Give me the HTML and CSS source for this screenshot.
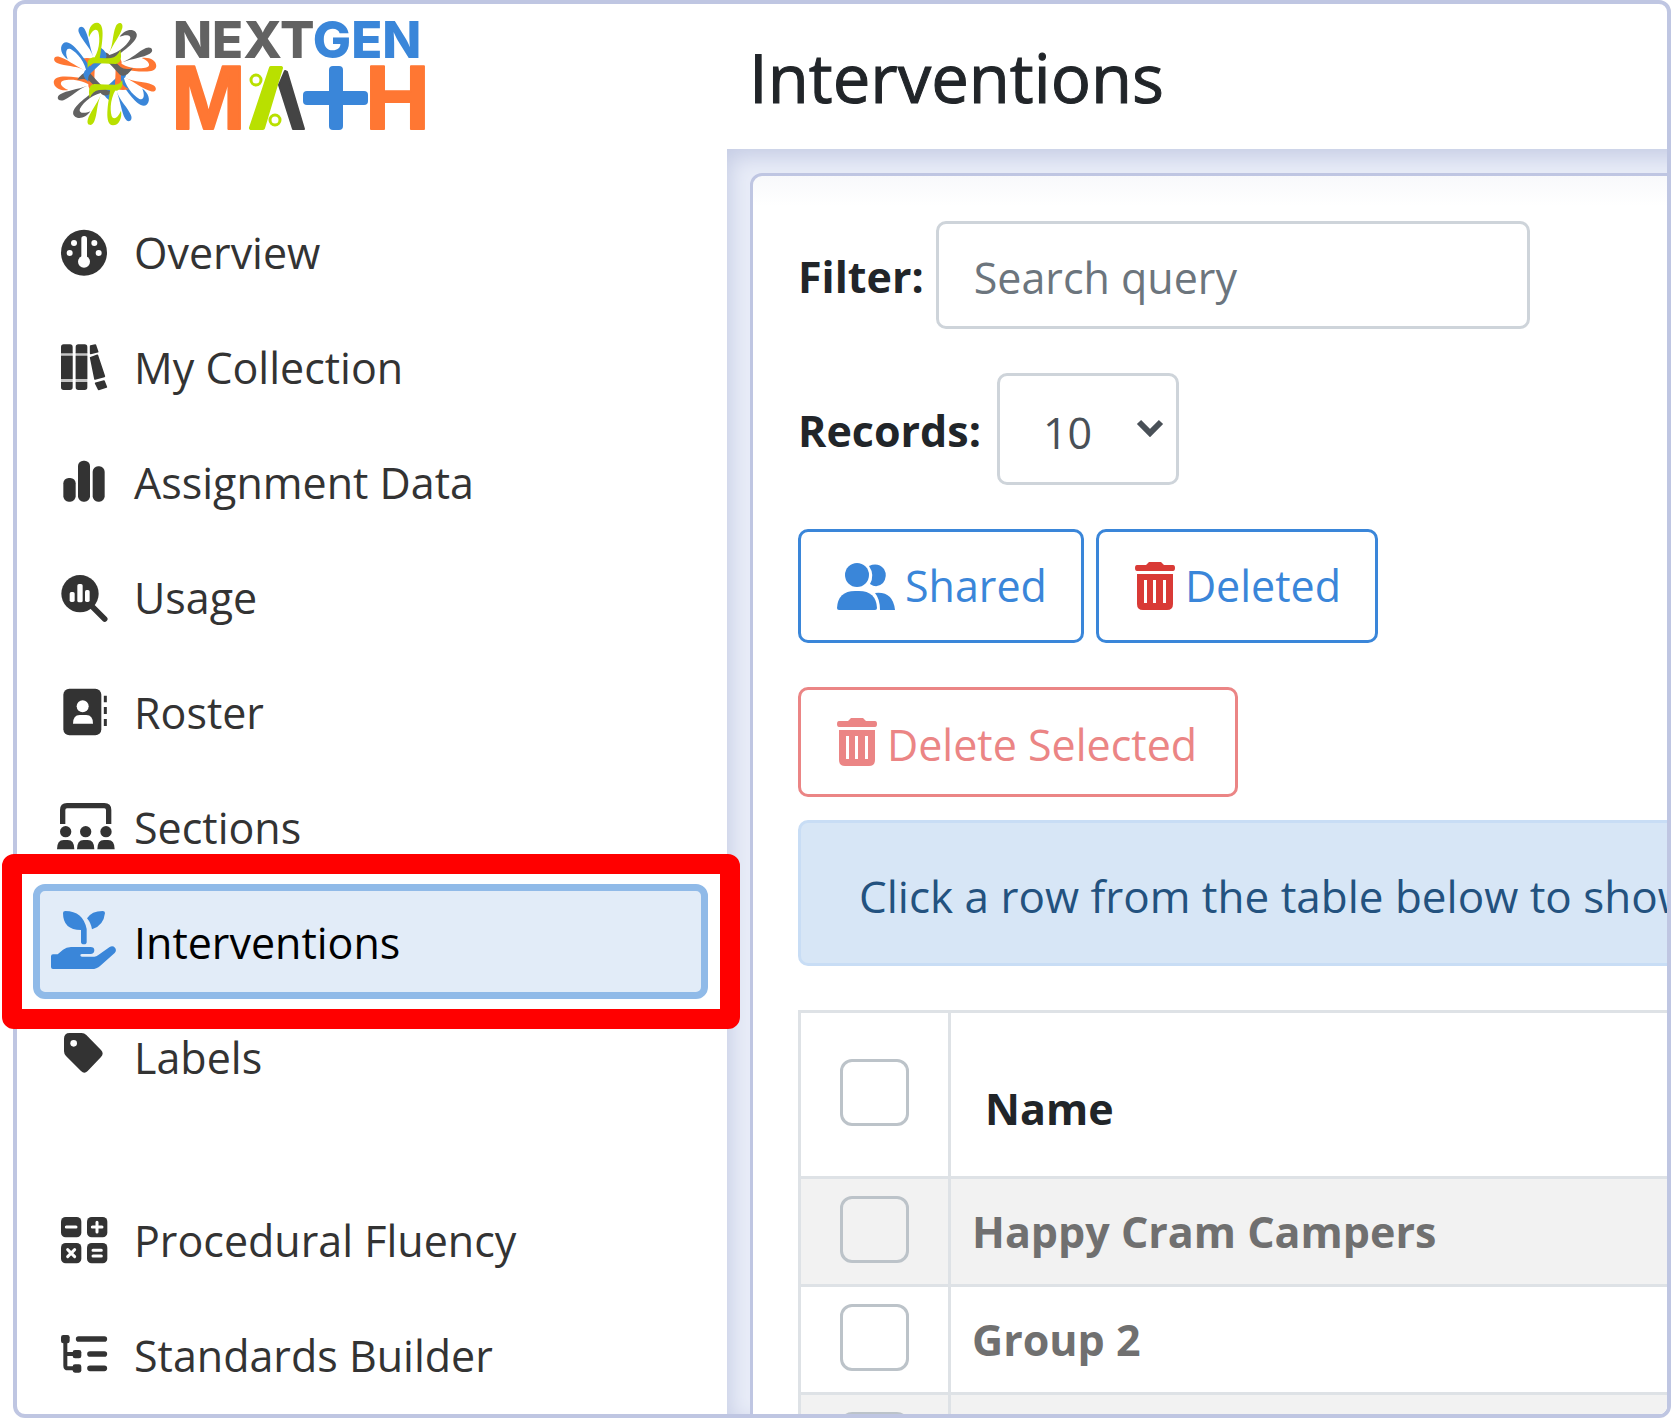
FILE: index.html
```html
<!DOCTYPE html>
<html lang="en">
<head>
    <meta charset="UTF-8">
    <meta name="viewport" content="width=device-width, initial-scale=1.0">
    <title>Interventions</title>
    <link rel="stylesheet" href="styles.css">
</head>
<body>
    <div class="frame">
        <aside class="sidebar">
            <svg class="logo" viewBox="0 0 380 120" role="img" aria-label="NextGen Math">
                <defs>
                    <g id="pi">
                        <path d="M-52 -18 Q-56 -46 -36 -50 Q-10 -46 18 -48 Q36 -50 46 -72 Q54 -34 32 -30 Q0 -32 -30 -32 Q-44 -32 -52 -18Z"/>
                        <path d="M12 -62 C26 -92 22 -118 32 -142 C38 -158 56 -156 52 -138 C46 -116 26 -92 12 -62Z"/>
                        <path d="M-40 -36 C-16 -66 -14 -104 -20 -126 C-26 -140 -40 -130 -48 -110 C-52 -132 -42 -154 -24 -154 C4 -152 -10 -88 -16 -44Z"/>
                    </g>
                </defs>
                <g transform="translate(55 59) scale(.333)">
                    <use href="#pi" fill="#3a86d9" transform="rotate(135)"/>
                    <use href="#pi" fill="#ff7733" transform="rotate(90)"/>
                    <use href="#pi" fill="#ff7733" transform="rotate(270)"/>
                    <use href="#pi" fill="#626262" transform="rotate(45)"/>
                    <use href="#pi" fill="#626262" transform="rotate(225)"/>
                    <use href="#pi" fill="#3a86d9" transform="rotate(315)"/>
                    <use href="#pi" fill="#b9e000"/>
                    <use href="#pi" fill="#b9e000" transform="rotate(180)"/>
                </g>
                <text class="logo-top" x="123" y="43">NEXT<tspan fill="#3a86d9">GEN</tspan></text>
                <text class="logo-bottom" x="121" y="114">M</text>
                <path d="M201 113 L213 113 L231 53 L221 53Z" fill="#b9e000" stroke="#b9e000" stroke-width="4" stroke-linejoin="round"/>
                <g fill="#fff" stroke="#b9e000" stroke-width="3">
                    <circle cx="206" cy="65" r="5"/>
                    <circle cx="225" cy="105" r="5"/>
                </g>
                <path d="M235 56 L229 70 L243 114 L254 114 L237 57Z" fill="#444" stroke="#444" stroke-width="2" stroke-linejoin="round"/>
                <g fill="#3a86d9">
                    <rect x="253" y="76" width="65" height="14" rx="4"/>
                    <rect x="279" y="51" width="14" height="64" rx="4"/>
                </g>
                <text class="logo-bottom" x="315" y="114">H</text>
            </svg>

            <nav>
                <ul class="menu">
                    <li><a href="#">
                        <svg class="icon" viewBox="0 0 210 210">
                            <circle cx="105" cy="107" r="69"/>
                            <g fill="#fff">
                                <circle cx="75" cy="78" r="9"/>
                                <circle cx="136" cy="78" r="9"/>
                                <circle cx="62" cy="108" r="9"/>
                                <circle cx="149" cy="108" r="9"/>
                                <circle cx="105" cy="134" r="18"/>
                                <rect x="97" y="57" width="17" height="75" rx="8"/>
                            </g>
                        </svg>
                        <span>Overview</span></a></li>
                    <li><a href="#">
                        <svg class="icon" viewBox="0 0 210 210">
                            <path d="M36 60H71V150H36Z M80 60H115V150H80Z" fill="#c4c4c4"/>
                            <path d="M36 64V45Q36 37 44 37H63Q71 37 71 45V64Z M36 71H71V141H36Z M36 150H71V166Q71 174 63 174H44Q36 174 36 166Z"/>
                            <path d="M80 64V45Q80 37 88 37H107Q115 37 115 45V64Z M80 71H115V141H80Z M80 150H115V166Q115 174 107 174H88Q80 174 80 166Z"/>
                            <path d="M125 42L139 39L146 59L125 64Z M125 77L145 70L166 133L138 141Z M140 154L165 147L172 165L149 172Z" stroke="#333" stroke-width="5" stroke-linejoin="round"/>
                        </svg>
                        <span>My Collection</span></a></li>
                    <li><a href="#">
                        <svg class="icon" viewBox="0 0 210 210">
                            <rect x="43" y="93" width="37" height="71" rx="16"/>
                            <rect x="87" y="41" width="36" height="123" rx="16"/>
                            <rect x="131" y="58" width="36" height="106" rx="16"/>
                        </svg>
                        <span>Assignment Data</span></a></li>
                    <li><a href="#">
                        <svg class="icon" viewBox="0 0 210 210">
                            <circle cx="93" cy="95" r="56"/>
                            <path d="M128 132L167 171" stroke="#333" stroke-width="17" stroke-linecap="round"/>
                            <g fill="#fff">
                                <rect x="62" y="90" width="15" height="30" rx="5"/>
                                <rect x="85" y="66" width="16" height="55" rx="5"/>
                                <rect x="108" y="84" width="14" height="36" rx="5"/>
                            </g>
                        </svg>
                        <span>Usage</span></a></li>
                    <li><a href="#">
                        <svg class="icon" viewBox="0 0 210 210">
                            <rect x="43" y="35" width="114" height="140" rx="18"/>
                            <path d="M169 56V76M169 90V111M169 126V147" stroke="#333" stroke-width="9"/>
                            <circle cx="101" cy="88" r="18" fill="#fff"/>
                            <path d="M72 140Q72 114 92 114H112Q132 114 132 140Z" fill="#fff"/>
                        </svg>
                        <span>Roster</span></a></li>
                    <li><a href="#">
                        <svg class="icon" viewBox="0 0 210 210">
                            <path d="M41 96V54Q41 41 54 41H166Q179 41 179 54V96" fill="none" stroke="#333" stroke-width="16"/>
                            <circle cx="50" cy="119" r="17"/>
                            <circle cx="110" cy="119" r="17"/>
                            <circle cx="171" cy="119" r="17"/>
                            <path d="M24 172Q24 144 44 144H56Q76 144 76 172Z M84 172Q84 144 104 144H116Q136 144 136 172Z M145 172Q145 144 165 144H177Q197 144 197 172Z"/>
                        </svg>
                        <span>Sections</span></a></li>
                    <li class="active"><a href="#">
                        <svg class="icon" viewBox="0 0 210 210">
                            <path d="M42 18Q42 12 49 12Q102 12 113 66V105Q113 112 105 112Q96 112 96 105V69Q42 69 42 18Z"/>
                            <path d="M114 34Q128 12 161 12Q168 12 168 18Q164 56 129 67Q126 48 114 34Z"/>
                            <path d="M12 142H26L42 128Q52 120 66 120H124Q136 120 136 130Q136 141 124 141H99Q94 141 94 145T99 149H136Q142 149 147 145L182 120Q191 115 198 122Q204 130 197 138L154 176Q143 186 128 186H12Q6 186 6 180V148Q6 142 12 142Z"/>
                        </svg>
                        <span>Interventions</span></a></li>
                    <li><a href="#">
                        <svg class="icon" viewBox="0 0 210 210">
                            <path d="M45 50Q45 33 62 33H98Q106 33 112 39L156 84Q166 95 156 105L116 147Q106 157 96 147L51 102Q45 96 45 88Z"/>
                            <circle cx="74" cy="64" r="10" fill="#fff"/>
                        </svg>
                        <span>Labels</span></a></li>
                    <li class="group-start"><a href="#">
                        <svg class="icon" viewBox="0 0 210 210">
                            <rect x="36" y="36" width="61" height="61" rx="14"/>
                            <rect x="114" y="36" width="61" height="61" rx="14"/>
                            <rect x="36" y="114" width="61" height="61" rx="14"/>
                            <rect x="114" y="114" width="61" height="61" rx="14"/>
                            <path d="M52 66H81M130 66H159M144 52V81M56 134L77 155M77 134L56 155M132 136H157M132 153H157" stroke="#fff" stroke-width="9" stroke-linecap="round"/>
                        </svg>
                        <span>Procedural Fluency</span></a></li>
                    <li><a href="#">
                        <svg class="icon" viewBox="0 0 210 210">
                            <path d="M49 57V137Q49 145 57 145H84M49 102H84" fill="none" stroke="#333" stroke-width="12"/>
                            <rect x="36" y="45" width="26" height="25" rx="7"/>
                            <rect x="71" y="90" width="26" height="25" rx="7"/>
                            <rect x="71" y="133" width="26" height="25" rx="7"/>
                            <path d="M89 57H166M123 102H166M123 145H166" stroke="#333" stroke-width="17" stroke-linecap="round"/>
                        </svg>
                        <span>Standards Builder</span></a></li>
                </ul>
            </nav>
        </aside>

        <main class="main">
            <header class="header">
                <h1>Interventions</h1>
            </header>
            <div class="content">
                <section class="card">
                    <div class="field">
                        <label for="filter">Filter:</label>
                        <input type="text" id="filter" placeholder="Search query">
                    </div>
                    <div class="field">
                        <label for="records">Records:</label>
                        <div class="select-wrap">
                            <select id="records">
                                <option>10</option>
                                <option>25</option>
                                <option>50</option>
                            </select>
                            <svg class="chevron" viewBox="0 0 28 18"><path d="M3 3L14 14L25 3"/></svg>
                        </div>
                    </div>
                    <div class="buttons">
                        <button type="button" class="btn">
                            <svg class="users" viewBox="0 0 58 48">
                                <path d="M32 4Q41 0 47 7Q51 14 46 21Q40 27 33 22Q38 13 32 4Z M38 31Q56 29 58 48H43Q43 37 38 31Z"/>
                                <circle cx="20" cy="13" r="12"/>
                                <path d="M0 46Q1 29 18 29H22Q39 29 40 46Q40 48 38 48H2Q0 48 0 46Z"/>
                            </svg>
                            Shared
                        </button>
                        <button type="button" class="btn">
                            <svg class="trash" viewBox="0 0 40 48">
                                <path d="M2 3H11L14 0H26L29 3H38Q40 3 40 6T38 9H2Q0 9 0 6T2 3Z"/>
                                <path fill-rule="evenodd" d="M2 12H38V42Q38 48 32 48H8Q2 48 2 42Z M9 18V41H12V18Z M18 18V41H21V18Z M28 18V41H31V18Z"/>
                            </svg>
                            Deleted
                        </button>
                    </div>
                    <div class="buttons">
                        <button type="button" class="btn btn-danger" disabled>
                            <svg class="trash" viewBox="0 0 40 48">
                                <path d="M2 3H11L14 0H26L29 3H38Q40 3 40 6T38 9H2Q0 9 0 6T2 3Z"/>
                                <path fill-rule="evenodd" d="M2 12H38V42Q38 48 32 48H8Q2 48 2 42Z M9 18V41H12V18Z M18 18V41H21V18Z M28 18V41H31V18Z"/>
                            </svg>
                            Delete Selected
                        </button>
                    </div>
                    <div class="alert">Click a row from the table below to show</div>
                    <table class="groups">
                        <thead>
                            <tr>
                                <th class="check"><input type="checkbox" aria-label="Select all"></th>
                                <th class="name">Name</th>
                            </tr>
                        </thead>
                        <tbody>
                            <tr>
                                <td class="check"><input type="checkbox" aria-label="Select Happy Cram Campers"></td>
                                <td>Happy Cram Campers</td>
                            </tr>
                            <tr>
                                <td class="check"><input type="checkbox" aria-label="Select Group 2"></td>
                                <td>Group 2</td>
                            </tr>
                            <tr>
                                <td class="check"><input type="checkbox" aria-label="Select row"></td>
                                <td></td>
                            </tr>
                        </tbody>
                    </table>
                </section>
            </div>
        </main>
    </div>
</body>
</html>
```
FILE: styles.css
```css
* {
    box-sizing: border-box;
}
body {
    margin: 0;
    padding: 0 0 1px 13px;
    height: 100vh;
    overflow: hidden;
    background: #fff;
    font-family: "Open Sans", "Noto Sans", sans-serif;
    font-size: 43px;
    line-height: 66px;
    color: #212529;
}
.frame {
    display: flex;
    height: 100%;
    border: 4px solid #bfc6e2;
    border-radius: 12px;
}
.sidebar {
    position: relative;
    z-index: 1;
    flex: 0 0 710px;
    padding-top: 11px;
}
.logo {
    display: block;
    width: 380px;
    height: 120px;
    margin-left: 33px;
    overflow: visible;
}
.logo-top {
    font-family: Inter, "Open Sans", sans-serif;
    font-size: 51px;
    font-weight: 800;
    fill: #626262;
}
.logo-bottom {
    font-family: "Liberation Sans", Arial, sans-serif;
    font-size: 90px;
    font-weight: 700;
    fill: #ff7733;
    stroke: #ff7733;
    stroke-width: 2px;
    stroke-linejoin: round;
}
.menu {
    list-style: none;
    margin: 59px 19px 0 16px;
    padding: 0;
}
.menu li {
    position: relative;
}
.menu a {
    display: flex;
    align-items: center;
    gap: 15px;
    height: 115px;
    padding: 0 9px;
    border: 7px solid transparent;
    border-radius: 12px;
    color: #333;
    text-decoration: none;
}
.menu span {
    padding-top: 3px;
}
.menu .group-start {
    margin-top: 68px;
}
.icon {
    width: 70px;
    height: 70px;
    fill: #333;
}
.menu .active a {
    background: #e2ecf8;
    border-color: #90bae8;
    color: #000;
}
.menu .active .icon {
    fill: #3a86d9;
}
.menu .active::after {
    content: "";
    position: absolute;
    top: -30px;
    right: -32px;
    bottom: -30px;
    left: -31px;
    border: 20px solid #f00;
    border-radius: 12px;
    pointer-events: none;
}
.main {
    flex: 1;
    min-width: 0;
    display: flex;
    flex-direction: column;
    overflow: hidden;
    border-radius: 0 8px 8px 0;
}
.header {
    flex: 0 0 145px;
    display: flex;
    align-items: center;
    padding: 1px 0 0 22px;
}
h1 {
    margin: 0;
    font-size: 67px;
    font-weight: 500;
    line-height: 80px;
    -webkit-text-stroke: 1px #212529;
}
.content {
    flex: 1;
    min-height: 0;
    margin-right: -60px;
    padding: 24px 0 0 23px;
    background: #e9edf8;
    box-shadow: inset 3px 8px 22px #c5cce4;
}
.card {
    min-height: 100%;
    padding: 45px 0 45px 45px;
    border: 3px solid #bfc6e2;
    border-radius: 12px;
    background: linear-gradient(#f8f9fb, #fff 30px);
}
.field, .buttons {
    display: flex;
    align-items: center;
    gap: 12px;
    margin-bottom: 44px;
}
label {
    padding-top: 4px;
    font-weight: 700;
}
input[type="text"], select {
    border: 3px solid #ced4da;
    border-radius: 10px;
    background: #fff;
    font: inherit;
    color: #495057;
}
input[type="text"] {
    width: 594px;
    height: 108px;
    padding: 4px 35px 0;
}
input::placeholder {
    color: #6c757d;
    opacity: 1;
}
.select-wrap {
    position: relative;
    margin-left: 4px;
}
select {
    display: block;
    appearance: none;
    width: 182px;
    height: 112px;
    padding: 8px 43px 0;
}
.chevron {
    position: absolute;
    right: 15px;
    top: 46px;
    width: 28px;
    height: 18px;
    fill: none;
    stroke: #495057;
    stroke-width: 6px;
    pointer-events: none;
}
.btn {
    display: flex;
    align-items: center;
    gap: 10px;
    padding: 21px 34px 21px 36px;
    border: 3px solid #3a86d9;
    border-radius: 10px;
    background: #fff;
    font: inherit;
    color: #3a86d9;
    white-space: nowrap;
}
.btn-danger {
    padding: 22px 38px 16px 36px;
    border-color: #eb8585;
    color: #eb8585;
}
.users {
    width: 58px;
    height: 48px;
    fill: #3a86d9;
}
.trash {
    width: 40px;
    height: 48px;
    fill: #d93a36;
}
.btn-danger .trash {
    margin-bottom: 6px;
    fill: #eb8585;
}
.buttons + .alert {
    margin-top: -21px;
}
.alert {
    margin-bottom: 44px;
    padding: 40px 58px 34px;
    border: 3px solid #c8ddf5;
    border-radius: 10px;
    background: #d7e6f6;
    font-size: 44px;
    color: #23527f;
    white-space: nowrap;
}
.groups {
    width: 100%;
    border-collapse: collapse;
    font-weight: 700;
    text-align: left;
}
.groups th, .groups td {
    height: 108px;
    padding: 0 21px;
    border: 3px solid #dee2e6;
}
.groups td {
    color: #707070;
}
.groups th {
    height: 166px;
}
.groups .name {
    padding: 28px 34px 0;
}
.groups .check {
    width: 150px;
    padding: 0 0 4px;
    text-align: center;
}
.groups tbody tr:nth-child(odd) {
    background: #f2f2f2;
}
input[type="checkbox"] {
    display: block;
    appearance: none;
    width: 69px;
    height: 67px;
    margin: 0 auto;
    border: 3px solid #bcc3c9;
    border-radius: 12px;
}
```
